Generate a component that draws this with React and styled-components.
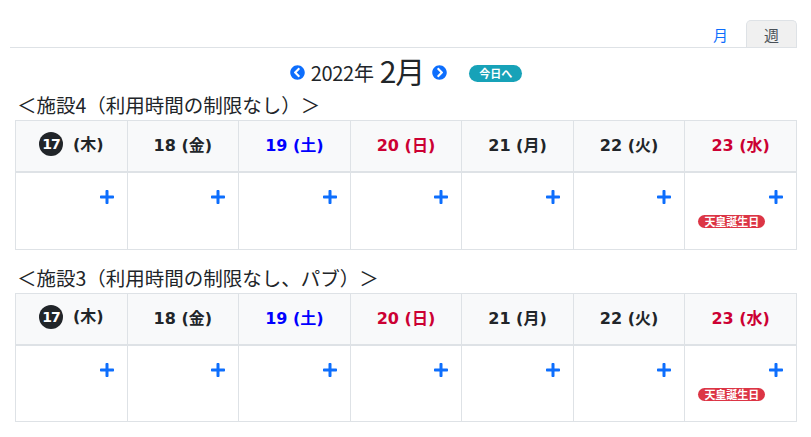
import { createGlobalStyle, styled } from "styled-components";
import { FaChevronCircleLeft, FaChevronCircleRight, FaPlus } from "react-icons/fa";

const days = [
    { day: 17, wd: "木", kind: "today" },
    { day: 18, wd: "金" },
    { day: 19, wd: "土", kind: "sat" },
    { day: 20, wd: "日", kind: "sun" },
    { day: 21, wd: "月" },
    { day: 22, wd: "火" },
    { day: 23, wd: "水", kind: "sun", holiday: "天皇誕生日" },
];

const facilities = [
    "＜施設4（利用時間の制限なし）＞",
    "＜施設3（利用時間の制限なし、パブ）＞",
];

const dayColors = {
    sat: "#0000ff",
    sun: "#cc0033",
};

export default function App() {
    return (
        <>
            <GlobalStyle />
            <Page>
                <Tabs>
                    <Tab>月</Tab>
                    <Tab $active>週</Tab>
                </Tabs>
                <Content>
                    <MonthNav>
                        <NavIcon><FaChevronCircleLeft /></NavIcon>
                        <Year>2022年</Year>
                        <Month>2月</Month>
                        <NavIcon><FaChevronCircleRight /></NavIcon>
                        <TodayBadge>今日へ</TodayBadge>
                    </MonthNav>
                    {facilities.map((name) => (
                        <Facility key={name}>
                            <FacilityTitle>{name}</FacilityTitle>
                            <WeekTable>
                                <thead>
                                    <tr>
                                        {days.map((d) => (
                                            <HeadCell key={d.day} $color={dayColors[d.kind]}>
                                                {d.kind === "today" ? (
                                                    <>
                                                        <TodayCircle>{d.day}</TodayCircle>
                                                        ({d.wd})
                                                    </>
                                                ) : (
                                                    <>{d.day} ({d.wd})</>
                                                )}
                                            </HeadCell>
                                        ))}
                                    </tr>
                                </thead>
                                <tbody>
                                    <tr>
                                        {days.map((d) => (
                                            <DayCell key={d.day}>
                                                <AddRow>
                                                    <FaPlus />
                                                </AddRow>
                                                {d.holiday && <HolidayBadge>{d.holiday}</HolidayBadge>}
                                            </DayCell>
                                        ))}
                                    </tr>
                                </tbody>
                            </WeekTable>
                        </Facility>
                    ))}
                </Content>
            </Page>
        </>
    );
}

const GlobalStyle = createGlobalStyle`
    body{
        margin: 0;
        background: #fff;
        color: #212529;
        font-family: "Noto Sans CJK JP", "Noto Sans", sans-serif;
    }
`;

const Page = styled.div`
    padding: 20px 14px 0 10px;
`;

const Tabs = styled.nav`
    display: flex;
    justify-content: flex-end;
    border-bottom: 1px solid #dee2e6;
`;

const Tab = styled.a`
    width: 49px;
    height: 26px;
    display: flex;
    align-items: center;
    justify-content: center;
    font-size: 15px;
    color: ${(p) => (p.$active ? "#495057" : "#0d6efd")};
    background: ${(p) => (p.$active ? "#f0f0f0" : "transparent")};
    border: 1px solid ${(p) => (p.$active ? "#dee2e6" : "transparent")};
    border-bottom: 0;
    border-radius: 5px 5px 0 0;
    cursor: pointer;
`;

const Content = styled.main`
    margin-left: 5px;
`;

const MonthNav = styled.div`
    margin-top: 5px;
    height: 38px;
    display: flex;
    align-items: center;
    justify-content: center;
`;

const NavIcon = styled.span`
    display: flex;
    color: #0d6efd;
    font-size: 15px;
    cursor: pointer;
`;

const Year = styled.span`
    font-size: 20px;
    margin-left: 6px;
    letter-spacing: -0.3px;
`;

const Month = styled.span`
    font-size: 30px;
    line-height: 36px;
    margin: -4px 8px 0 6px;
    letter-spacing: -1px;
`;

const TodayBadge = styled.span`
    margin-left: 22px;
    margin-top: 2px;
    background: #17a2b8;
    color: #fff;
    font-size: 11px;
    font-weight: 700;
    padding: 1px 10px;
    border-radius: 9px;
    line-height: 15px;
`;

const Facility = styled.section`
    & + & {
        margin-top: 14px;
    }
`;

const FacilityTitle = styled.h2`
    margin: 0 0 1px;
    font-size: 19.5px;
    font-weight: 400;
    line-height: 28px;
    padding-left: 2px;
    color: #212529;
`;

const WeekTable = styled.table`
    width: 782px;
    table-layout: fixed;
    border-collapse: collapse;
    border: 1px solid #dee2e6;
`;

const HeadCell = styled.th`
    height: 46px;
    padding: 0 0 4px;
    background: #f8f9fa;
    border: 1px solid #dee2e6;
    border-bottom: 2px solid #dee2e6;
    font-family: "DejaVu Sans", "Noto Sans CJK JP", sans-serif;
    font-size: 16px;
    font-weight: 700;
    color: ${(p) => p.$color || "#212529"};
    text-align: center;
    vertical-align: middle;
    white-space: nowrap;
`;

const TodayCircle = styled.span`
    display: inline-flex;
    align-items: center;
    justify-content: center;
    width: 24px;
    height: 24px;
    border-radius: 50%;
    background: #212529;
    color: #fff;
    font-size: 14px;
    letter-spacing: -1px;
    margin-right: 10px;
    vertical-align: middle;
    position: relative;
    top: -1px;
`;

const DayCell = styled.td`
    height: 77px;
    padding: 16px 12px 0 13px;
    border: 1px solid #dee2e6;
    vertical-align: top;
    box-sizing: border-box;
`;

const AddRow = styled.div`
    display: flex;
    justify-content: flex-end;
    color: #0d6efd;
    font-size: 16px;
    cursor: pointer;
`;

const HolidayBadge = styled.span`
    display: inline-block;
    margin-top: 10px;
    background: #dc3545;
    color: #fff;
    font-size: 11px;
    font-weight: 700;
    line-height: 13px;
    padding: 0 6px;
    border-radius: 7px;
`;
